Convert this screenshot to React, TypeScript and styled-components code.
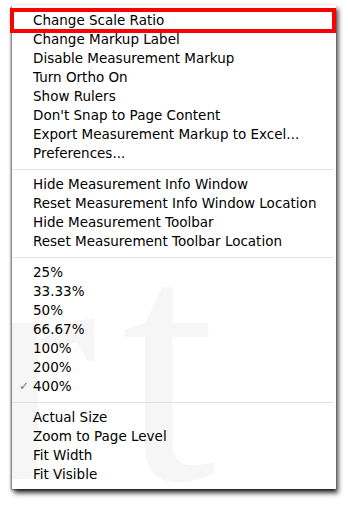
import styled, { createGlobalStyle } from 'styled-components'

const GlobalStyle = createGlobalStyle`
  html, body {
    margin: 0;
    padding: 0;
    background: #ffffff;
  }
  body {
    font-family: "DejaVu Sans", "Liberation Sans", sans-serif;
  }
`

const Page = styled.div`
  width: 348px;
  height: 505px;
  position: relative;
  overflow: hidden;
  background: #ffffff;
  padding: 5px 0 0 12px;
  box-sizing: border-box;
`

const Menu = styled.div`
  position: relative;
  width: 324px;
  background: #ffffff;
  padding: 6px 0 5px;
  box-sizing: border-box;
  box-shadow: 2px 4px 5px rgba(0, 0, 0, 0.8), -1px 1px 2px rgba(0, 0, 0, 0.55);
  overflow: hidden;
`

// faint background watermark behind the menu items
const Watermark = styled.div`
  position: absolute;
  left: -28px;
  top: 190px;
  font-family: "Liberation Serif", "DejaVu Serif", serif;
  font-size: 340px;
  line-height: 1;
  letter-spacing: 24px;
  color: #f6f6f6;
  pointer-events: none;
  user-select: none;
`

const Group = styled.div`
  position: relative;
  display: flex;
  flex-direction: column;
`

const Separator = styled.div`
  position: relative;
  height: 1px;
  margin: 6px 3px 5px 0;
  background: #e2e2e2;
`

const Item = styled.div<{ $checked?: boolean }>`
  height: 19px;
  line-height: 19px;
  padding-left: 21px;
  font-size: 13.5px;
  color: #000000;
  white-space: nowrap;
  position: relative;

  &::before {
    content: ${props => (props.$checked ? "'✓'" : "none")};
    position: absolute;
    left: 7px;
    top: 0;
    color: #777777;
    font-size: 12px;
  }
`

const Highlight = styled.div`
  position: absolute;
  left: 10px;
  top: 8px;
  width: 326px;
  height: 25px;
  border: 4px solid #ff0000;
  box-sizing: border-box;
`

const groups: { label: string; checked?: boolean }[][] = [
  [
    { label: 'Change Scale Ratio' },
    { label: 'Change Markup Label' },
    { label: 'Disable Measurement Markup' },
    { label: 'Turn Ortho On' },
    { label: 'Show Rulers' },
    { label: "Don't Snap to Page Content" },
    { label: 'Export Measurement Markup to Excel...' },
    { label: 'Preferences...' },
  ],
  [
    { label: 'Hide Measurement Info Window' },
    { label: 'Reset Measurement Info Window Location' },
    { label: 'Hide Measurement Toolbar' },
    { label: 'Reset Measurement Toolbar Location' },
  ],
  [
    { label: '25%' },
    { label: '33.33%' },
    { label: '50%' },
    { label: '66.67%' },
    { label: '100%' },
    { label: '200%' },
    { label: '400%', checked: true },
  ],
  [
    { label: 'Actual Size' },
    { label: 'Zoom to Page Level' },
    { label: 'Fit Width' },
    { label: 'Fit Visible' },
  ],
]

const App = () => {
  return (
    <>
      <GlobalStyle />
      <Page>
        <Menu>
          <Watermark aria-hidden="true">rt</Watermark>
          {groups.map((group, i) => (
            <div key={i}>
              {i > 0 && <Separator />}
              <Group>
                {group.map(item => (
                  <Item key={item.label} $checked={item.checked}>{item.label}</Item>
                ))}
              </Group>
            </div>
          ))}
        </Menu>
        <Highlight />
      </Page>
    </>
  )
}

export default App
